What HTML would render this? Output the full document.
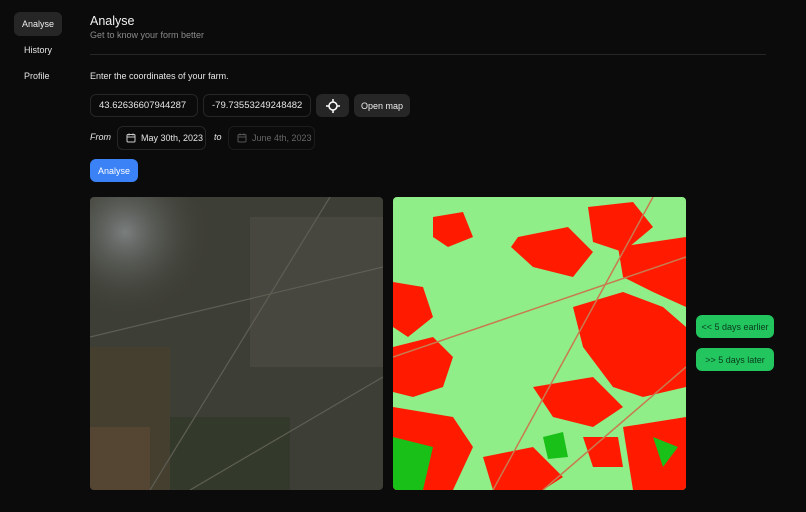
<!DOCTYPE html>
<html><head><style>
*{box-sizing:border-box;margin:0;padding:0}
body{width:806px;height:512px;background:#0b0b0b;font-family:"Liberation Sans",sans-serif;color:#e5e5e5;position:relative;overflow:hidden}
.a{position:absolute;white-space:nowrap}
.btn{position:absolute;border-radius:6px;font-size:9px;display:flex;align-items:center;justify-content:center;white-space:nowrap}
.inp{position:absolute;border:1px solid #262626;border-radius:6px;font-size:9.5px;display:flex;align-items:center;padding-left:8px;color:#e5e5e5;white-space:nowrap}
</style></head><body>
<div class="btn" style="left:14px;top:12px;width:48px;height:24px;background:#262626;color:#eee">Analyse</div>
<div class="a" style="left:24px;top:45px;font-size:9px">History</div>
<div class="a" style="left:24px;top:71px;font-size:9px">Profile</div>
<div class="a" style="left:90px;top:14px;font-size:12.5px;color:#f2f2f2">Analyse</div>
<div class="a" style="left:90px;top:30px;font-size:9px;color:#8a8a8a">Get to know your form better</div>
<div class="a" style="left:90px;top:54px;width:676px;height:1px;background:#262626"></div>
<div class="a" style="left:90px;top:71px;font-size:9px">Enter the coordinates of your farm.</div>
<div class="inp" style="left:90px;top:94px;width:108px;height:23px">43.62636607944287</div>
<div class="inp" style="left:203px;top:94px;width:108px;height:23px">-79.73553249248482</div>
<div class="btn" style="left:316px;top:94px;width:33px;height:23px;background:#262626"><svg width="14" height="14" viewBox="0 0 14 14" fill="none" stroke="#fff" stroke-width="1.5"><circle cx="7" cy="7" r="4"/><path d="M7 0v3M7 11v3M0 7h3M11 7h3"/></svg></div>
<div class="btn" style="left:354px;top:94px;width:56px;height:23px;background:#262626;color:#eee">Open map</div>
<div class="a" style="left:90px;top:132px;font-size:9px;font-style:italic">From</div>
<div class="inp" style="left:117px;top:126px;width:89px;height:24px;padding-left:8px;font-size:9px"><svg width="10" height="10" viewBox="0 0 10 10" fill="none" stroke="#ccc" stroke-width="1"><rect x="1" y="1.5" width="8" height="7.5" rx="1"/><path d="M1 4h8M3 0.5v2M7 0.5v2"/></svg><span style="margin-left:5px">May 30th, 2023</span></div>
<div class="a" style="left:214px;top:132px;font-size:9px;font-style:italic">to</div>
<div class="inp" style="left:228px;top:126px;width:87px;height:24px;color:#666;border-color:#1c1c1c;font-size:9px"><svg width="10" height="10" viewBox="0 0 10 10" fill="none" stroke="#555" stroke-width="1"><rect x="1" y="1.5" width="8" height="7.5" rx="1"/><path d="M1 4h8M3 0.5v2M7 0.5v2"/></svg><span style="margin-left:5px">June 4th, 2023</span></div>
<div class="btn" style="left:90px;top:159px;width:48px;height:23px;background:#3b82f6;color:#fff">Analyse</div>
<svg class="a" style="left:90px;top:197px;border-radius:4px" width="293" height="293">
<defs><radialGradient id="g1" cx="0.12" cy="0.12" r="0.3"><stop offset="0" stop-color="#7a7e7e"/><stop offset="1" stop-color="#3d3e35" stop-opacity="0"/></radialGradient></defs>
<rect width="293" height="293" fill="#3d3e35"/>
<rect x="0" y="150" width="80" height="143" fill="#443f2e"/>
<rect x="0" y="230" width="60" height="63" fill="#554533"/>
<rect x="160" y="20" width="133" height="150" fill="#47473f"/>
<rect x="80" y="220" width="120" height="73" fill="#343a2b"/>
<rect width="293" height="293" fill="url(#g1)"/>
<path d="M60 293L240 0M0 140L293 70M100 293L293 180" stroke="#5e5e55" stroke-width="1.2" fill="none"/>
</svg>
<svg class="a" style="left:393px;top:197px;border-radius:4px" width="293" height="293">
<rect width="293" height="293" fill="#90ee88"/>
<g fill="#ff1a00">
<polygon points="125,40 175,30 200,55 180,80 140,70 118,50"/>
<polygon points="195,10 240,5 260,30 230,55 200,45"/>
<polygon points="225,50 293,40 293,110 260,95 230,80"/>
<polygon points="0,85 30,90 40,120 15,140 0,130"/>
<polygon points="180,110 230,95 270,110 293,130 293,190 250,200 220,190 190,150"/>
<polygon points="140,190 200,180 230,210 200,230 160,220"/>
<polygon points="0,150 40,140 60,160 50,190 20,200 0,195"/>
<polygon points="0,210 60,220 80,250 60,293 0,293"/>
<polygon points="90,260 140,250 170,280 150,293 100,293"/>
<polygon points="230,230 293,220 293,293 240,293"/>
<polygon points="40,20 70,15 80,40 55,50 40,40"/>
<polygon points="190,240 225,240 230,270 200,270"/>
</g>
<g fill="#18c018"><polygon points="0,240 40,250 30,293 0,293"/><polygon points="260,240 285,250 270,270"/><polygon points="150,240 170,235 175,260 155,262"/></g>
<path d="M100 293L260 0M0 160L293 60M150 293L293 170" stroke="#c87a50" stroke-width="1.5" fill="none"/>
</svg>
<div class="btn" style="left:696px;top:315px;width:78px;height:23px;background:#22c55e;color:#0b3b1c">&lt;&lt; 5 days earlier</div>
<div class="btn" style="left:696px;top:348px;width:78px;height:23px;background:#22c55e;color:#0b3b1c">&gt;&gt; 5 days later</div>
</body></html>
